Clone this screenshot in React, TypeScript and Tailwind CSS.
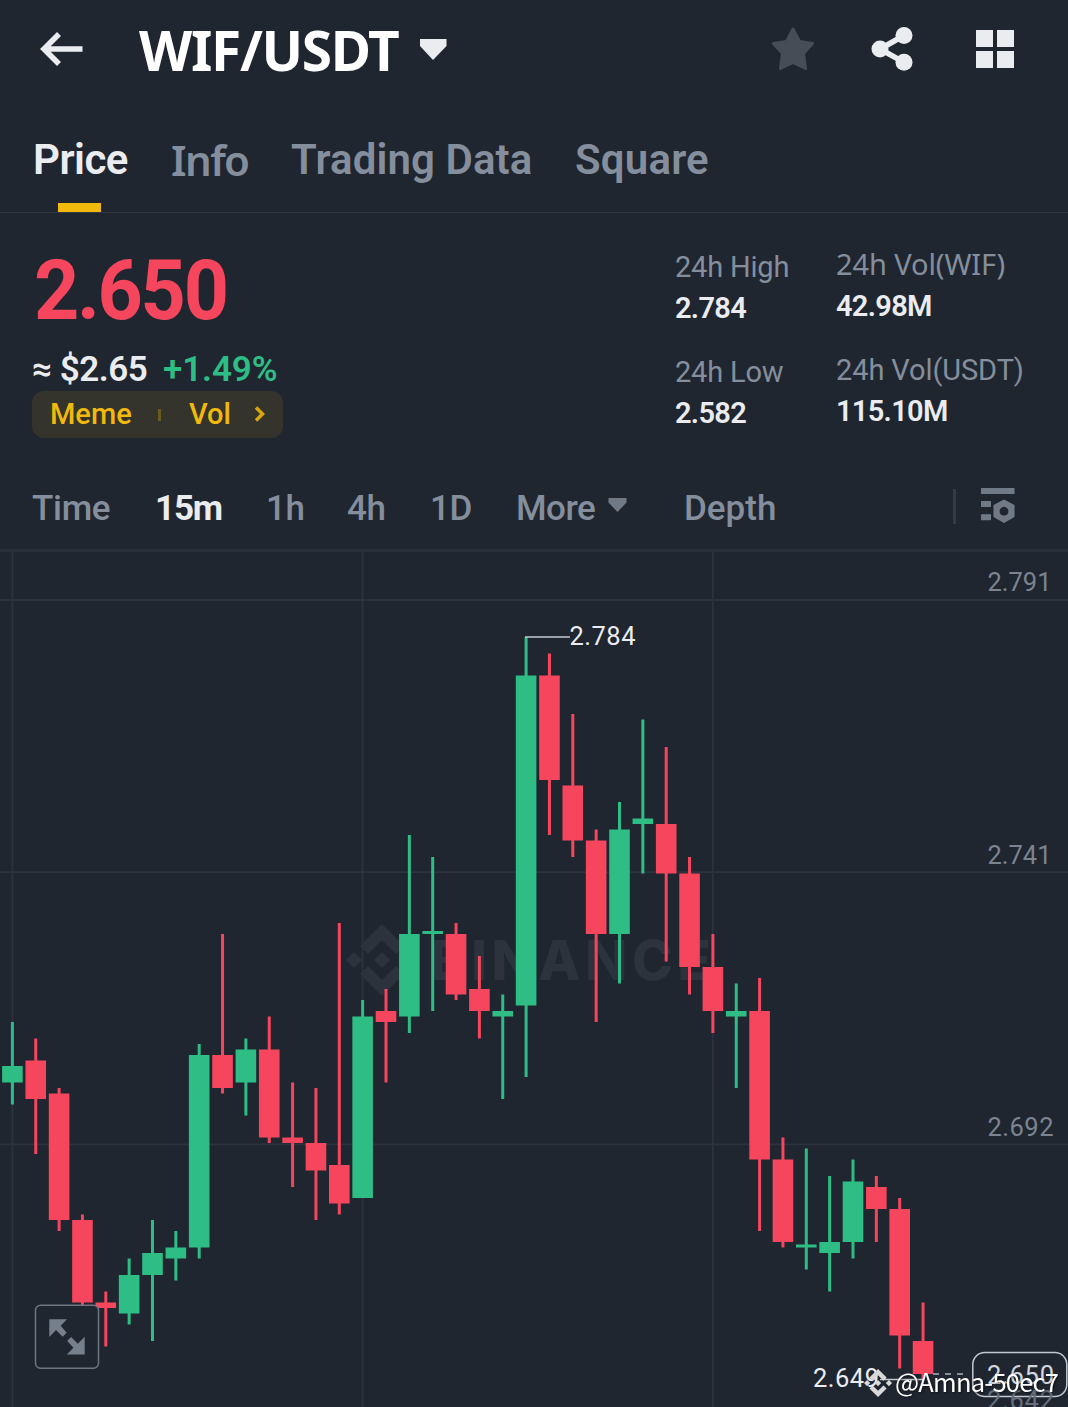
import { clsx } from 'clsx';

type Candle = [open: number, high: number, low: number, close: number];

// 15m candles, prices in thousandths of a USDT
const candles: Candle[] = [
  [2703, 2714, 2699, 2706],
  [2707, 2711, 2690, 2700],
  [2701, 2702, 2676, 2678],
  [2678, 2679, 2662, 2663],
  [2663, 2665, 2655, 2662],
  [2661, 2671, 2659, 2668],
  [2668, 2678, 2656, 2672],
  [2671, 2676, 2667, 2673],
  [2673, 2710, 2671, 2708],
  [2708, 2730, 2701, 2702],
  [2703, 2711, 2697, 2709],
  [2709, 2715, 2692, 2693],
  [2693, 2703, 2684, 2692],
  [2692, 2702, 2678, 2687],
  [2688, 2732, 2679, 2681],
  [2682, 2718, 2682, 2715],
  [2716, 2720, 2703, 2714],
  [2715, 2748, 2712, 2730],
  [2730, 2744, 2716, 2730],
  [2730, 2732, 2718, 2719],
  [2720, 2726, 2711, 2716],
  [2715, 2719, 2700, 2716],
  [2717, 2784, 2704, 2777],
  [2777, 2781, 2748, 2758],
  [2757, 2770, 2744, 2747],
  [2747, 2749, 2714, 2730],
  [2730, 2754, 2721, 2749],
  [2750, 2769, 2741, 2751],
  [2750, 2764, 2725, 2741],
  [2741, 2744, 2719, 2724],
  [2724, 2730, 2712, 2716],
  [2715, 2721, 2702, 2716],
  [2716, 2722, 2676, 2689],
  [2689, 2693, 2673, 2674],
  [2673, 2691, 2669, 2673],
  [2672, 2686, 2665, 2674],
  [2674, 2689, 2671, 2685],
  [2684, 2686, 2674, 2680],
  [2680, 2682, 2651, 2657],
  [2656, 2663, 2649, 2650],
];

const UP = '#2ebd85';
const DOWN = '#f6465d';
const STEP = 23.35;
const BODY = 20.6;

const xOf = (i: number) => 12.4 + i * STEP;
const yOf = (price: number) => 85 + (2784 - price) * 5.5;

const tabs = [
  { label: 'Price', width: 'w-[138px]', text: 'tracking-[-0.5px]', active: true },
  { label: 'Info', width: 'w-[120px]', text: "font-['Noto_Sans',sans-serif] tracking-[-1.6px]" },
  { label: 'Trading Data', width: 'w-[283px]', text: 'tracking-[0.1px]' },
  { label: 'Square', width: 'w-[140px]', text: 'pl-px tracking-[0.2px]' },
];

const intervals = [
  { label: 'Time', width: 'w-[123px]' },
  { label: '15m', width: 'w-[111px]', active: true },
  { label: '1h', width: 'w-[81px]' },
  { label: '4h', width: 'w-[83px]' },
  { label: '1D', width: 'w-[85px]' },
];

function BinanceMark() {
  return (
    <path d="M36 0 58 22 50 30 36 16 22 30 14 22ZM0 36 8 28 16 36 8 44ZM28 36 36 28 44 36 36 44ZM56 36 64 28 72 36 64 44ZM36 72 14 50 22 42 36 56 50 42 58 50Z" />
  );
}

function Header() {
  return (
    <header className="flex h-[98px] items-center pl-[39px] pr-[54px]">
      <svg className="mr-[54px] h-9 w-[45px]" viewBox="0 0 45 36" fill="none" stroke="#eaecef" strokeWidth="5.6">
        <path d="M43.500 18H5M20 3 5 18l15 15" />
      </svg>
      <h1 className="w-[281px] whitespace-nowrap pl-px font-['Noto_Sans',sans-serif] text-[55px] leading-none font-bold tracking-[-1.3px] text-white">
        WIF/USDT
      </h1>
      <svg className="h-[21px] w-[28px]" viewBox="0 0 28 21" fill="#eaecef">
        <path d="M1 0h26.500v7L14 21 1 7Z" />
      </svg>
      <div className="ml-auto flex items-center">
        <svg className="mr-[56px] h-11 w-[44px]" viewBox="0 0 44 44" fill="#474d57" stroke="#474d57" strokeWidth="3" strokeLinejoin="round">
          <path d="M22 2 28.500 14.500 41.500 16.500 32.500 26.500 34.500 41.500 22 35.500 9.500 41.500 11.500 26.500 2.500 16.500 15.500 14.500Z" />
        </svg>
        <svg className="mr-[63px] h-11 w-[42px]" viewBox="0 0 42 44" fill="#eaecef">
          <circle cx="9" cy="22" r="8.500" />
          <circle cx="33" cy="8.500" r="8.500" />
          <circle cx="33" cy="35.300" r="8.500" />
          <path d="M33 8.500 9 22 33 35.300" fill="none" stroke="#eaecef" strokeWidth="5.500" />
        </svg>
        <div className="grid grid-cols-2 gap-1">
          {[0, 1, 2, 3].map((i) => (
            <div key={i} className="h-[17px] w-[17px] bg-[#eaecef]" />
          ))}
        </div>
      </div>
    </header>
  );
}

function Tabs() {
  return (
    <nav className="flex h-[115px] border-b border-[#323844] pl-[33px]">
      {tabs.map(({ label, width, text, active }) => (
        <div key={label} className={clsx('flex h-full shrink-0 flex-col justify-between', width)}>
          <span
            className={clsx(
              'whitespace-nowrap pt-[36px] text-[42px] leading-[51px] font-semibold',
              text,
              active ? 'text-[#eaecef]' : 'text-[#848e9c]'
            )}
          >
            {label}
          </span>
          {active && <div className="ml-[25px] h-[9px] w-[43px] bg-[#f0b90b]" />}
        </div>
      ))}
    </nav>
  );
}

function Stat({ label, value, text }: { label: string; value: string; text: string }) {
  return (
    <div className="h-[105px] whitespace-nowrap">
      <div className={clsx('h-[41px] text-[29px] text-[#848e9c]', text)}>{label}</div>
      <div className="text-[29px] leading-[41px] font-semibold tracking-[-0.7px] text-[#eaecef]">{value}</div>
    </div>
  );
}

function Summary() {
  return (
    <section className="flex h-[253px] pl-8">
      <div className="w-[643px] pt-[36px]">
        <div className="origin-left scale-x-[0.94] pl-[2px] text-[84px] leading-[84px] font-bold tracking-[-2.4px] text-[#f6465d]">
          2.650
        </div>
        <div className="mt-[16px] flex h-[42px] items-center text-[35px] leading-[42px] font-semibold whitespace-nowrap">
          <span className="w-[131px] tracking-[-0.5px] text-[#eaecef]">≈ $2.65</span>
          <span className="tracking-[-0.1px] text-[#2ebd85]">+1.49%</span>
        </div>
        <div className="flex h-[47px] w-[251px] items-center rounded-xl bg-[#35342c] pl-[18px] text-[29px] text-[#f0b90b]">
          <span className="w-[108px] pt-px font-medium">Meme</span>
          <span className="mr-7 h-3 w-[3px] bg-[#6b5a1e]" />
          <span className="w-[65px] pt-px font-medium">Vol</span>
          <svg className="mb-px h-4 w-3" viewBox="0 0 12 16" fill="none" stroke="#d9a80f" strokeWidth="3.500">
            <path d="M2 1.500 8.500 8 2 14.500" />
          </svg>
        </div>
      </div>
      <div className="w-[161px] pt-[34px]">
        <Stat label="24h High" value="2.784" text="leading-[41px] tracking-[-0.2px]" />
        <Stat label="24h Low" value="2.582" text="leading-[41px] tracking-[-0.2px]" />
      </div>
      <div className="pt-8">
        <Stat label="24h Vol(WIF)" value="42.98M" text="font-['Noto_Sans',sans-serif] leading-[38px] tracking-[-0.1px]" />
        <Stat label="24h Vol(USDT)" value="115.10M" text="leading-[41px] tracking-[-0.1px]" />
      </div>
    </section>
  );
}

function IntervalBar() {
  return (
    <div className="flex h-[86px] items-center border-b-[3px] border-[#292f39] pl-8 text-[35px] font-medium whitespace-nowrap text-[#848e9c]">
      {intervals.map(({ label, width, active }) => (
        <span
          key={label}
          className={clsx('shrink-0 pt-[3px]', width, active ? 'font-bold tracking-[-1.2px] text-[#eaecef]' : 'tracking-[-0.3px]')}
        >
          {label}
        </span>
      ))}
      <span className="w-[93px] shrink-0 pt-[3px] pl-px tracking-[-0.5px]">More</span>
      <svg className="mr-[56px] mb-[6px] h-[14px] w-[19px]" viewBox="0 0 19 14" fill="#707a86">
        <path d="M0.500 0h18v4.500L9.500 14 0.500 4.500Z" />
      </svg>
      <span className="pt-[3px] pl-px">Depth</span>
      <div className="mr-[24px] mb-[3px] ml-auto h-[35px] w-[3px] bg-[#333a45]" />
      <svg className="mr-[52px] mb-[5px] h-9 w-9" viewBox="0 0 36 36" fill="#707a86">
        <path d="M1 1h33.500v6H1ZM1 14h10v6H1ZM1 27.300h10v6H1Z" />
        <path fillRule="evenodd" d="M24 12.500 34.500 18v12L24 36 13.500 30V18ZM24 19.800a4.400 4.400 0 1 0 .01 0Z" />
      </svg>
    </div>
  );
}

function Chart() {
  return (
    <svg className="block h-[855px] w-full" viewBox="0 0 1068 855" fontFamily="Roboto, sans-serif" fontSize="25.500">
      {/* Grid */}
      <g stroke="#2d333e" strokeWidth="1.800">
        {[12.4, 362.6, 712.8].map((x) => (
          <line key={x} x1={x} x2={x} y1={0} y2={855} />
        ))}
        {[48, 320.2, 592.4].map((y) => (
          <line key={y} x1={0} x2={1068} y1={y} y2={y} />
        ))}
      </g>

      {/* Watermark */}
      <g fill="#2d333d">
        <g transform="translate(346 372)">
          <BinanceMark />
        </g>
        <text x="430" y="428" fontFamily="Inter, sans-serif" fontWeight="800" fontSize="55" textLength="281">
          BINANCE
        </text>
      </g>

      {/* Candles */}
      {candles.map(([open, high, low, close], i) => {
        const top = yOf(Math.max(open, close));
        const bottom = yOf(Math.min(open, close));
        const height = Math.max(bottom - top, 3);
        return (
          <g key={i} fill={close >= open ? UP : DOWN}>
            <rect x={xOf(i) - 1.5} y={yOf(high)} width={3} height={yOf(low) - yOf(high)} />
            <rect x={xOf(i) - BODY / 2} y={bottom - height} width={BODY} height={height} />
          </g>
        );
      })}

      {/* Price scale */}
      <g fill="#7b8491">
        <text x="987.500" y="39" textLength="64">2.791</text>
        <text x="987.500" y="312" textLength="64">2.741</text>
        <text x="987.500" y="584" textLength="66">2.692</text>
      </g>

      {/* High / low callouts */}
      <g fill="#eaecef">
        <path d="M525 85H570M880 827.500H923" stroke="#c3c8d0" strokeWidth="1.600" />
        <text x="569.500" y="93" textLength="66">2.784</text>
        <text x="813" y="835" textLength="66">2.649</text>
      </g>

      {/* Last price */}
      <path d="M933 822H964" stroke="#848e9c" strokeWidth="2" strokeDasharray="6 6" />
      <rect x="972.800" y="800.500" width="94" height="44" rx="12" fill="#202630" stroke="#c3c8d0" strokeWidth="1.500" />
      <text x="987" y="832" textLength="67" fill="#d3d6dc">2.650</text>
      <text x="987" y="857" textLength="67" fill="#666f7c">2.642</text>

      {/* Fullscreen button */}
      <rect x="35.500" y="753.300" width="63" height="63" rx="5" fill="#202630" stroke="#6c7581" strokeWidth="1.500" />
      <path
        d="M49.300 767.200H67L60.700 773.700 66.700 780.700 62.700 784.700 56 778 49.300 785ZM84.700 784.800V802.500H66.800L73.500 795.700 67.200 789 71 785 77.800 791.700Z"
        fill="#76808c"
      />

      {/* Author tag */}
      <g transform="translate(864 817) scale(0.39)" fill="#d9d9d9">
        <BinanceMark />
      </g>
      <text
        x="895"
        y="840"
        textLength="164"
        fontFamily="'Noto Sans CJK SC', sans-serif"
        fontSize="25.500"
        fill="#ffffff"
        className="drop-shadow-[1px_1px_1px_rgba(0,0,0,0.6)]"
      >
        @Amna-50ec7
      </text>
    </svg>
  );
}

export default function App() {
  return (
    <div className="h-[1407px] w-[1068px] overflow-hidden bg-[#202630] font-[Roboto,sans-serif]">
      <Header />
      <Tabs />
      <Summary />
      <IntervalBar />
      <Chart />
    </div>
  );
}
